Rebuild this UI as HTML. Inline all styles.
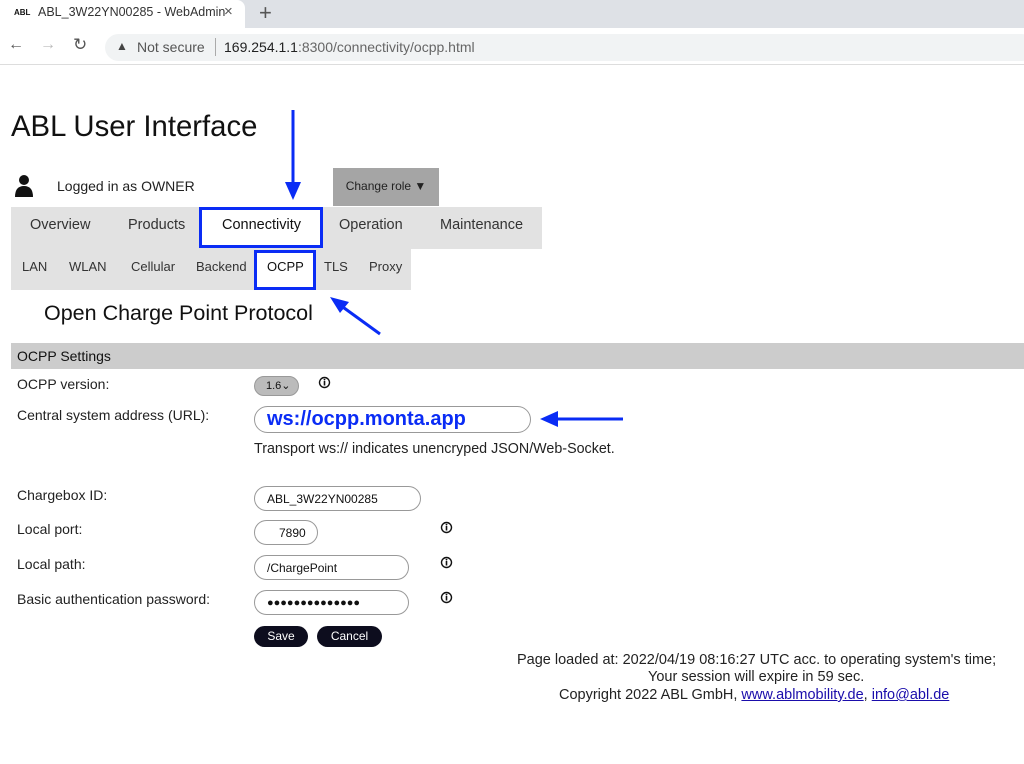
<!DOCTYPE html>
<html><head><style>
*{margin:0;padding:0;box-sizing:border-box}
body{width:1024px;height:764px;background:#fff;font-family:"Liberation Sans",sans-serif;position:relative;overflow:hidden;color:#111}
.a{position:absolute;white-space:nowrap}
.in{position:absolute;border:1px solid #999;border-radius:14px;background:#fff;font-size:12px;padding-left:12px;display:flex;align-items:center}
.lbl{position:absolute;font-size:14px;color:#222;left:17px}
.btn{position:absolute;background:#0d0d1e;color:#fff;border-radius:11px;font-size:12px;height:21px;line-height:21px;text-align:center}
</style></head><body>
<div class="a" style="left:0;top:0;width:1024px;height:28px;background:#dee1e6"></div>
<div class="a" style="left:0;top:0;width:245px;height:28px;background:#fff;border-radius:0 8px 0 0"></div>
<div class="a" style="left:14px;top:8px;font-size:8px;font-weight:bold">ABL</div>
<div class="a" style="left:38px;top:5px;font-size:12.5px;color:#333">ABL_3W22YN00285 - WebAdmin</div>
<div class="a" style="left:224px;top:3px;font-size:15px;color:#555">×</div>
<div class="a" style="left:259px;top:0px;font-size:22px;color:#555">+</div>
<div class="a" style="left:0;top:28px;width:1024px;height:37px;background:#fff;border-bottom:1px solid #ddd"></div>
<div class="a" style="left:8px;top:36px;font-size:16px;color:#555">←</div>
<div class="a" style="left:40px;top:36px;font-size:16px;color:#bbb">→</div>
<div class="a" style="left:73px;top:35px;font-size:17px;color:#555">↻</div>
<div class="a" style="left:105px;top:34px;width:930px;height:27px;background:#f1f3f4;border-radius:14px"></div>
<div class="a" style="left:116px;top:39px;font-size:12px;color:#444">▲</div>
<div class="a" style="left:137px;top:39px;font-size:14px;color:#555">Not secure</div>
<div class="a" style="left:215px;top:38px;width:1px;height:18px;background:#aaa"></div>
<div class="a" style="left:224px;top:39px;font-size:14px;color:#222">169.254.1.1<span style="color:#666">:8300/connectivity/ocpp.html</span></div>

<div class="a" style="left:11px;top:110px;font-size:29.3px;color:#111">ABL User Interface</div>
<svg class="a" style="left:14px;top:174px" width="20" height="24"><circle cx="10" cy="6" r="5" fill="#111"/><path d="M1 23 Q1 12 10 12 Q19 12 19 23Z" fill="#111"/></svg>
<div class="a" style="left:57px;top:178px;font-size:14px;color:#222">Logged in as OWNER</div>
<div class="a" style="left:333px;top:168px;width:106px;height:38px;background:#a5a5a5;font-size:12px;line-height:36px;text-align:center;color:#222">Change role ▼</div>

<div class="a" style="left:11px;top:207px;width:531px;height:42px;background:#e2e2e2"></div>
<div class="a" style="left:199px;top:207px;width:124px;height:41px;background:#fff;border:3px solid #0a2cf5"></div>
<div class="a" style="left:30px;top:217px;font-size:14.5px;color:#333">Overview</div>
<div class="a" style="left:128px;top:217px;font-size:14.5px;color:#333">Products</div>
<div class="a" style="left:222px;top:217px;font-size:14.5px;color:#111">Connectivity</div>
<div class="a" style="left:339px;top:217px;font-size:14.5px;color:#333">Operation</div>
<div class="a" style="left:440px;top:217px;font-size:14.5px;color:#333">Maintenance</div>

<div class="a" style="left:11px;top:249px;width:400px;height:41px;background:#e2e2e2"></div>
<div class="a" style="left:254px;top:250px;width:62px;height:40px;background:#fff;border:3px solid #0a2cf5"></div>
<div class="a" style="left:22px;top:259px;font-size:13px;color:#333">LAN</div>
<div class="a" style="left:69px;top:259px;font-size:13px;color:#333">WLAN</div>
<div class="a" style="left:131px;top:259px;font-size:13px;color:#333">Cellular</div>
<div class="a" style="left:196px;top:259px;font-size:13px;color:#333">Backend</div>
<div class="a" style="left:267px;top:259px;font-size:13px;color:#111">OCPP</div>
<div class="a" style="left:324px;top:259px;font-size:13px;color:#333">TLS</div>
<div class="a" style="left:369px;top:259px;font-size:13px;color:#333">Proxy</div>

<div class="a" style="left:44px;top:301px;font-size:21.5px;color:#111">Open Charge Point Protocol</div>

<svg class="a" style="left:0;top:0" width="1024" height="764">
<g stroke="#0a2cf5" stroke-width="3" fill="#0a2cf5">
<line x1="293" y1="110" x2="293" y2="185"/><path d="M285 182 L293 200 L301 182Z" stroke="none"/>
<line x1="380" y1="334" x2="340" y2="305"/><path d="M330 297 L349 302 L340 313Z" stroke="none"/>
<line x1="623" y1="419" x2="556" y2="419"/><path d="M540 419 L558 411 L558 427Z" stroke="none"/>
</g>
<g fill="none" stroke="#111" stroke-width="1.4">
<circle cx="324.5" cy="382.5" r="5"/><circle cx="446.5" cy="527.5" r="5"/><circle cx="446.5" cy="562.5" r="5"/><circle cx="446.5" cy="597.5" r="5"/>
</g>
<g stroke="#111" stroke-width="1.6">
<line x1="324.5" y1="381" x2="324.5" y2="385.5"/><line x1="446.5" y1="526" x2="446.5" y2="530.5"/><line x1="446.5" y1="561" x2="446.5" y2="565.5"/><line x1="446.5" y1="596" x2="446.5" y2="600.5"/>
</g>
<g fill="#111"><circle cx="324.5" cy="379.6" r="0.9"/><circle cx="446.5" cy="524.6" r="0.9"/><circle cx="446.5" cy="559.6" r="0.9"/><circle cx="446.5" cy="594.6" r="0.9"/></g>
</svg>

<div class="a" style="left:11px;top:343px;width:1013px;height:26px;background:#ccc"></div>
<div class="a" style="left:17px;top:348px;font-size:14px;color:#111">OCPP Settings</div>

<div class="lbl" style="top:376px">OCPP version:</div>
<div class="a" style="left:254px;top:376px;width:45px;height:20px;background:#bbb;border:1px solid #999;border-radius:10px;font-size:11px;line-height:18px;padding-left:11px">1.6⌄</div>

<div class="lbl" style="top:407px">Central system address (URL):</div>
<div class="in" style="left:254px;top:406px;width:277px;height:27px;font-size:20px;font-weight:bold;color:#0a2cf5">ws://ocpp.monta.app</div>
<div class="a" style="left:254px;top:441px;font-size:14.3px;color:#222">Transport ws:// indicates unencryped JSON/Web-Socket.</div>

<div class="lbl" style="top:487px">Chargebox ID:</div>
<div class="in" style="left:254px;top:486px;width:167px;height:25px">ABL_3W22YN00285</div>
<div class="lbl" style="top:521px">Local port:</div>
<div class="in" style="left:254px;top:520px;width:64px;height:25px;padding-left:24px">7890</div>
<div class="lbl" style="top:556px">Local path:</div>
<div class="in" style="left:254px;top:555px;width:155px;height:25px">/ChargePoint</div>
<div class="lbl" style="top:591px">Basic authentication password:</div>
<div class="in" style="left:254px;top:590px;width:155px;height:25px;font-size:11px">●●●●●●●●●●●●●●</div>

<div class="btn" style="left:254px;top:626px;width:54px">Save</div>
<div class="btn" style="left:317px;top:626px;width:65px">Cancel</div>

<div class="a" style="left:517px;top:652px;font-size:14.5px;color:#222">Page loaded at: 2022/04/19 08:16:27 UTC acc. to operating system's time;</div>
<div class="a" style="left:648px;top:669px;font-size:14.5px;color:#222">Your session will expire in 59 sec.</div>
<div class="a" style="left:559px;top:687px;font-size:14.5px;color:#222">Copyright 2022 ABL GmbH, <u style="color:#1a0dab">www.ablmobility.de</u>, <u style="color:#1a0dab">info@abl.de</u></div>
</body></html>
